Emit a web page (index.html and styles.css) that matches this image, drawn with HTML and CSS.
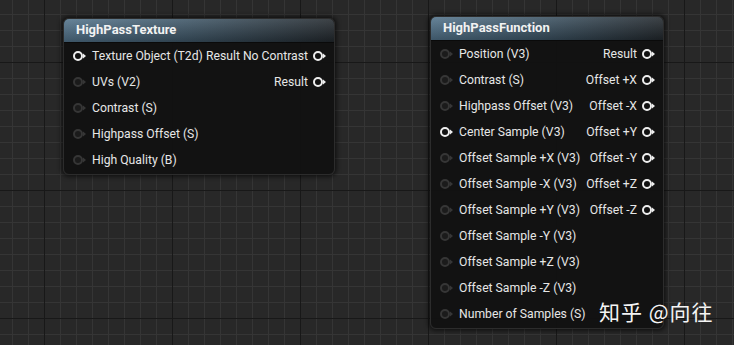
FILE: index.html
```html
<!DOCTYPE html>
<html lang="en">
<head>
    <meta charset="UTF-8">
    <meta name="viewport" content="width=device-width, initial-scale=1.0">
    <title>HighPass Material Graph</title>
    <link rel="stylesheet" href="styles.css">
</head>
<body>
    <div class="graph">

        <div class="node node-texture">
            <div class="node-title">HighPassTexture</div>
            <div class="node-body">
                <div class="row">
                    <span class="pin on"><svg viewBox="0 0 14 10"><circle cx="5" cy="5" r="4"/><polygon points="10,2.5 13,5 10,7.5"/></svg>Texture Object (T2d)</span>
                    <span class="pin out">Result No Contrast<svg viewBox="0 0 14 10"><circle cx="5" cy="5" r="4"/><polygon points="10,2.5 13,5 10,7.5"/></svg></span>
                </div>
                <div class="row">
                    <span class="pin"><svg viewBox="0 0 14 10"><circle cx="5" cy="5" r="4"/><polygon points="10,2.5 13,5 10,7.5"/></svg>UVs (V2)</span>
                    <span class="pin out">Result<svg viewBox="0 0 14 10"><circle cx="5" cy="5" r="4"/><polygon points="10,2.5 13,5 10,7.5"/></svg></span>
                </div>
                <div class="row">
                    <span class="pin"><svg viewBox="0 0 14 10"><circle cx="5" cy="5" r="4"/><polygon points="10,2.5 13,5 10,7.5"/></svg>Contrast (S)</span>
                </div>
                <div class="row">
                    <span class="pin"><svg viewBox="0 0 14 10"><circle cx="5" cy="5" r="4"/><polygon points="10,2.5 13,5 10,7.5"/></svg>Highpass Offset (S)</span>
                </div>
                <div class="row">
                    <span class="pin"><svg viewBox="0 0 14 10"><circle cx="5" cy="5" r="4"/><polygon points="10,2.5 13,5 10,7.5"/></svg>High Quality (B)</span>
                </div>
            </div>
        </div>

        <div class="node node-function">
            <div class="node-title">HighPassFunction</div>
            <div class="node-body">
                <div class="row">
                    <span class="pin"><svg viewBox="0 0 14 10"><circle cx="5" cy="5" r="4"/><polygon points="10,2.5 13,5 10,7.5"/></svg>Position (V3)</span>
                    <span class="pin out">Result<svg viewBox="0 0 14 10"><circle cx="5" cy="5" r="4"/><polygon points="10,2.5 13,5 10,7.5"/></svg></span>
                </div>
                <div class="row">
                    <span class="pin"><svg viewBox="0 0 14 10"><circle cx="5" cy="5" r="4"/><polygon points="10,2.5 13,5 10,7.5"/></svg>Contrast (S)</span>
                    <span class="pin out">Offset +X<svg viewBox="0 0 14 10"><circle cx="5" cy="5" r="4"/><polygon points="10,2.5 13,5 10,7.5"/></svg></span>
                </div>
                <div class="row">
                    <span class="pin"><svg viewBox="0 0 14 10"><circle cx="5" cy="5" r="4"/><polygon points="10,2.5 13,5 10,7.5"/></svg>Highpass Offset (V3)</span>
                    <span class="pin out">Offset -X<svg viewBox="0 0 14 10"><circle cx="5" cy="5" r="4"/><polygon points="10,2.5 13,5 10,7.5"/></svg></span>
                </div>
                <div class="row">
                    <span class="pin on"><svg viewBox="0 0 14 10"><circle cx="5" cy="5" r="4"/><polygon points="10,2.5 13,5 10,7.5"/></svg>Center Sample (V3)</span>
                    <span class="pin out">Offset +Y<svg viewBox="0 0 14 10"><circle cx="5" cy="5" r="4"/><polygon points="10,2.5 13,5 10,7.5"/></svg></span>
                </div>
                <div class="row">
                    <span class="pin"><svg viewBox="0 0 14 10"><circle cx="5" cy="5" r="4"/><polygon points="10,2.5 13,5 10,7.5"/></svg>Offset Sample +X (V3)</span>
                    <span class="pin out">Offset -Y<svg viewBox="0 0 14 10"><circle cx="5" cy="5" r="4"/><polygon points="10,2.5 13,5 10,7.5"/></svg></span>
                </div>
                <div class="row">
                    <span class="pin"><svg viewBox="0 0 14 10"><circle cx="5" cy="5" r="4"/><polygon points="10,2.5 13,5 10,7.5"/></svg>Offset Sample -X (V3)</span>
                    <span class="pin out">Offset +Z<svg viewBox="0 0 14 10"><circle cx="5" cy="5" r="4"/><polygon points="10,2.5 13,5 10,7.5"/></svg></span>
                </div>
                <div class="row">
                    <span class="pin"><svg viewBox="0 0 14 10"><circle cx="5" cy="5" r="4"/><polygon points="10,2.5 13,5 10,7.5"/></svg>Offset Sample +Y (V3)</span>
                    <span class="pin out">Offset -Z<svg viewBox="0 0 14 10"><circle cx="5" cy="5" r="4"/><polygon points="10,2.5 13,5 10,7.5"/></svg></span>
                </div>
                <div class="row">
                    <span class="pin"><svg viewBox="0 0 14 10"><circle cx="5" cy="5" r="4"/><polygon points="10,2.5 13,5 10,7.5"/></svg>Offset Sample -Y (V3)</span>
                </div>
                <div class="row">
                    <span class="pin"><svg viewBox="0 0 14 10"><circle cx="5" cy="5" r="4"/><polygon points="10,2.5 13,5 10,7.5"/></svg>Offset Sample +Z (V3)</span>
                </div>
                <div class="row">
                    <span class="pin"><svg viewBox="0 0 14 10"><circle cx="5" cy="5" r="4"/><polygon points="10,2.5 13,5 10,7.5"/></svg>Offset Sample -Z (V3)</span>
                </div>
                <div class="row">
                    <span class="pin"><svg viewBox="0 0 14 10"><circle cx="5" cy="5" r="4"/><polygon points="10,2.5 13,5 10,7.5"/></svg>Number of Samples (S)</span>
                </div>
            </div>
        </div>

        <div class="watermark">知乎 @向往</div>
    </div>
</body>
</html>
```

FILE: styles.css
```css
body { margin: 0; font-family: Roboto, "Noto Sans", sans-serif; }

.graph {
    position: relative;
    width: 734px;
    height: 345px;
    overflow: hidden;
    background-color: #282828;
    background-image:
        linear-gradient(to right, #181818 1px, transparent 1px),
        linear-gradient(to bottom, #181818 1px, transparent 1px),
        linear-gradient(to right, #353535 1px, transparent 1px),
        linear-gradient(to bottom, #353535 1px, transparent 1px);
    background-size: 128px 128px, 128px 128px, 16px 16px, 16px 16px;
    background-position: 44px 62px, 44px 62px, 12px 14px, 12px 14px;
}

/* nodes sit on the canvas at their graph position */
.node {
    position: absolute;
    background: rgba(18, 18, 18, 0.97);
    border: 1px solid #2c2c2c;
    border-radius: 6px;
    box-shadow: 0 0 4px 2px rgba(0, 0, 0, 0.55);
    overflow: hidden;
}
.node-texture { left: 63px; top: 18px; width: 270px; }
.node-function { left: 430px; top: 16px; width: 232px; }

.node-title {
    height: 23px;
    line-height: 22px;
    padding-left: 12px;
    color: #f2f2f2;
    font-size: 13px;
    font-weight: bold;
    background: linear-gradient(to bottom, rgba(255,255,255,0.12), rgba(0,0,0,0.25)),
                linear-gradient(to right, #52738b 0%, #3e5667 45%, #22282d 100%);
    border-bottom: 1px solid #0a0a0a;
}

.node-body { padding: 0 7px 1px 9px; }

.row {
    height: 26px;
    display: flex;
    align-items: center;
    justify-content: space-between;
    white-space: nowrap;
}

.pin {
    display: flex;
    align-items: center;
    gap: 5px;
    flex-shrink: 0;
    color: #e6e6e6;
    font-size: 12.2px;
}
.pin svg { width: 14px; height: 10px; }
.pin circle { fill: #1b1b1b; stroke: #363636; stroke-width: 2; }
.pin polygon { fill: #363636; }
.pin.on circle, .pin.out circle { fill: #111; stroke: #eeeeee; }
.pin.on polygon, .pin.out polygon { fill: #eeeeee; }
.pin.out { margin-left: auto; }

.watermark {
    position: absolute;
    left: 599px;
    top: 296px;
    color: #f4f4f4;
    font-family: "Noto Sans CJK SC", sans-serif;
    font-size: 21px;
    letter-spacing: 1px;
}
```
